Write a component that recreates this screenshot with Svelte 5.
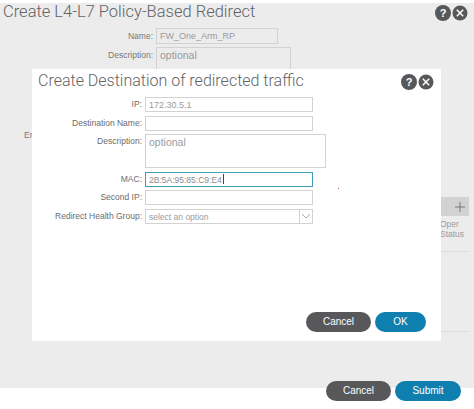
<script>
    const rows = [
        { label: 'IP:', value: '172.30.5.1' },
        { label: 'Destination Name:', value: '' },
        { label: 'Description:', value: 'optional', area: true },
        { label: 'MAC:', value: '2B:5A:95:85:C9:E4', focus: true },
        { label: 'Second IP:', value: '' }
    ];
</script>

{#snippet icons()}
    <div class="icons">
        <span class="round">?</span>
        <svg class="round-x" viewBox="0 0 16 16" width="16" height="16">
            <circle cx="8" cy="8" r="7.5" fill="#58585b" />
            <path d="M4.8 4.8l6.4 6.4M11.2 4.8l-6.4 6.4" stroke="#fff" stroke-width="1.5" fill="none" />
        </svg>
    </div>
{/snippet}

<div class="page">
    <div class="outer">
        <header class="outer-head">
            <h1>Create L4-L7 Policy-Based Redirect</h1>
            {@render icons()}
        </header>
        <div class="outer-form">
            <div class="outer-row">
                <span class="outer-label">Name:</span>
                <div class="field name">FW_One_Arm_RP</div>
            </div>
            <div class="outer-row">
                <span class="outer-label">Description:</span>
                <div class="field outer-desc">optional</div>
            </div>
        </div>
        <span class="cut-label">En</span>
        <div class="side">
            <div class="plus">
                <svg viewBox="0 0 12 12" width="12" height="12">
                    <path d="M6 1v10M1 6h10" stroke="#77787a" stroke-width="1" fill="none" />
                </svg>
            </div>
            <div class="oper">Oper<br />Status</div>
            <div class="rule first"></div>
            <div class="rule second"></div>
        </div>
    </div>

    <footer class="outer-foot">
        <button class="btn grey">Cancel</button>
        <button class="btn blue wide">Submit</button>
    </footer>

    <div class="modal">
        <header class="modal-head">
            <h2>Create Destination of redirected traffic</h2>
            {@render icons()}
        </header>
        <div class="modal-form">
            {#each rows as row}
                <div class="row">
                    <span class="label">{row.label}</span>
                    <div class="field input" class:area={row.area} class:focus={row.focus} class:hint={row.area}>
                        {row.value}{#if row.focus}<span class="caret"></span>{/if}
                    </div>
                </div>
            {/each}
            <div class="row">
                <span class="label">Redirect Health Group:</span>
                <div class="field input select">
                    <span class="select-text">select an option</span>
                    <span class="arrow">
                        <svg viewBox="0 0 10 6" width="10" height="6">
                            <path d="M1 1l4 4 4-4" stroke="#a9aaac" stroke-width="1" fill="none" />
                        </svg>
                    </span>
                </div>
            </div>
        </div>
        <span class="dot"></span>
        <footer class="modal-foot">
            <button class="btn grey">Cancel</button>
            <button class="btn blue">OK</button>
        </footer>
    </div>
</div>

<style>
    :global(body) {
        margin: 0;
        background: #fff;
    }

    .page {
        position: relative;
        width: 474px;
        height: 409px;
        overflow: hidden;
        font-family: "Liberation Sans", Arial, sans-serif;
        color: #58585b;
    }

    .outer {
        position: relative;
        height: 385px;
        margin-top: 3px;
        background: #ececec;
        box-sizing: border-box;
    }

    .outer-head {
        display: flex;
        justify-content: space-between;
        align-items: center;
        height: 20px;
        padding: 0 6px 0 3px;
    }

    h1, h2 {
        margin: -3px 0 0;
        font-family: Roboto, "Liberation Sans", sans-serif;
        font-weight: 300;
        white-space: nowrap;
        color: #626365;
    }

    h1 {
        font-size: 16.5px;
    }

    h2 {
        font-size: 16px;
    }

    .icons {
        display: flex;
        gap: 1px;
    }

    .round {
        width: 16px;
        height: 16px;
        border-radius: 50%;
        background: #58585b;
        color: #fff;
        font-size: 11px;
        font-weight: 700;
        line-height: 16px;
        text-align: center;
    }

    .round-x {
        display: block;
    }

    .outer-form {
        display: flex;
        flex-direction: column;
        gap: 3px;
        padding-top: 5px;
    }

    .outer-row {
        display: flex;
        align-items: flex-start;
        gap: 3px;
    }

    .outer-label {
        width: 153px;
        text-align: right;
        font-size: 8.5px;
        line-height: 16px;
        color: #77787a;
    }

    .field {
        box-sizing: border-box;
        border: 1px solid #d2d2d2;
        font-size: 9px;
        color: #9a9b9d;
        padding: 0 3px;
    }

    .name {
        width: 122px;
        height: 16px;
        line-height: 14px;
    }

    .outer-desc {
        width: 135px;
        height: 40px;
        font-size: 10.5px;
        line-height: 14px;
    }

    .cut-label {
        position: absolute;
        left: 24px;
        top: 127px;
        font-size: 8.5px;
        color: #77787a;
    }

    .side {
        position: absolute;
        left: 441px;
        top: 194px;
        width: 33px;
    }

    .plus {
        display: flex;
        justify-content: flex-end;
        align-items: center;
        width: 28px;
        height: 19px;
        background: #d2d2d2;
        box-sizing: border-box;
        padding-right: 3px;
    }

    .oper {
        margin: 3px 0 0 -1px;
        font-size: 8.5px;
        line-height: 10px;
        color: #9a9b9d;
    }

    .rule {
        height: 1px;
        width: 27px;
        background: #dcdcdc;
    }

    .rule.first {
        margin-top: 12px;
    }

    .rule.second {
        margin-top: 79px;
    }

    .outer-foot {
        position: relative;
        display: flex;
        justify-content: flex-end;
        gap: 4px;
        padding: 0 13px 0 0;
        margin-top: -7px;
    }

    .btn {
        width: 65px;
        height: 20px;
        padding: 0;
        border: none;
        border-radius: 10px;
        color: #fff;
        font-family: inherit;
        font-size: 10px;
        line-height: 18px;
    }

    .grey {
        background: #58585b;
    }

    .blue {
        width: 51px;
        background: #0f7fb0;
    }

    .blue.wide {
        width: 66px;
    }

    .modal {
        position: absolute;
        left: 32px;
        top: 69px;
        width: 409px;
        height: 272px;
        background: #fff;
        display: flex;
        flex-direction: column;
    }

    .modal-head {
        display: flex;
        justify-content: space-between;
        align-items: center;
        height: 24px;
        padding: 1px 7px 0 6px;
    }

    .modal-form {
        display: flex;
        flex-direction: column;
        gap: 3.6px;
        padding-top: 3px;
    }

    .row {
        display: flex;
        align-items: flex-start;
        gap: 3px;
    }

    .label {
        width: 110px;
        text-align: right;
        font-size: 8.5px;
        line-height: 14px;
        color: #6a6b6d;
        white-space: nowrap;
    }

    .input {
        width: 168px;
        height: 15px;
        line-height: 14px;
    }

    .area {
        width: 181px;
        height: 34px;
    }

    .hint {
        font-size: 10.5px;
    }

    .focus {
        border-color: #3f9fb5;
        color: #8a8b8d;
        font-size: 8.5px;
    }

    .caret {
        display: inline-block;
        width: 1px;
        height: 10px;
        margin-left: 1px;
        vertical-align: -1px;
        background: #444;
    }

    .select {
        display: flex;
        justify-content: space-between;
        padding-right: 0;
    }

    .select-text {
        line-height: 14px;
        font-size: 8.5px;
    }

    .arrow {
        display: flex;
        align-items: center;
        justify-content: center;
        width: 12px;
        border-left: 1px solid #d2d2d2;
    }

    .dot {
        position: absolute;
        left: 306px;
        top: 119px;
        width: 1px;
        height: 1px;
        background: #c05a78;
    }

    .modal-foot {
        display: flex;
        justify-content: flex-end;
        gap: 4px;
        margin-top: auto;
        padding: 0 15px 9px 0;
    }
</style>
